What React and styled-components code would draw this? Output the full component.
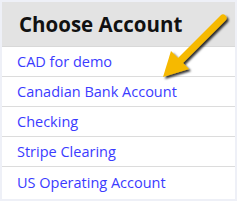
import styled, { createGlobalStyle } from 'styled-components'

const Global = createGlobalStyle`
  html, body {
    margin: 0;
    padding: 0;
    background: #eef0f7;
  }
  body {
    font-family: "Open Sans", "DejaVu Sans", sans-serif;
  }
`

const Page = styled.div`
  position: relative;
  width: 237px;
  height: 201px;
  padding: 2px;
  box-sizing: border-box;
`

const Panel = styled.div`
  background: #fff;
  width: 233px;
  height: 197px;
  display: flex;
  flex-flow: column;
`

const Header = styled.div`
  background: #e3e3e3;
  height: 45px;
  display: flex;
  align-items: center;
  padding-left: 17px;
  box-sizing: border-box;
  font-size: 20.5px;
  font-weight: bold;
  color: #111;
  border-bottom: 1px solid #d8d8d8;
`

const Row = styled.a`
  display: flex;
  align-items: center;
  height: 30px;
  box-sizing: border-box;
  padding-left: 15px;
  font-size: 14.5px;
  color: #3b3bff;
  text-decoration: none;
  border-bottom: ${props => props.last ? 'none' : '1px solid #dcdcdc'};
`

const Arrow = styled.svg`
  position: absolute;
  left: 154px;
  top: 10px;
  overflow: visible;
`

const accounts = [
  'CAD for demo',
  'Canadian Bank Account',
  'Checking',
  'Stripe Clearing',
  'US Operating Account',
]

export default function App() {
  return (
    <Page>
      <Global />
      <Panel>
        <Header>Choose Account</Header>
        {accounts.map((a, i) => (
          <Row key={a} href="#" last={i === accounts.length - 1}>{a}</Row>
        ))}
      </Panel>
      <Arrow width="80" height="75" viewBox="0 0 80 75">
        <defs>
          <filter id="sh" x="-20%" y="-20%" width="150%" height="150%">
            <feDropShadow dx="2" dy="2" stdDeviation="1.2" floodColor="#000" floodOpacity="0.8" />
          </filter>
        </defs>
        <g filter="url(#sh)">
          <line x1="69" y1="8" x2="25" y2="52" stroke="#f6b900" strokeWidth="7" strokeLinecap="round" />
          <polygon points="9,67 17,41 35,59" fill="#f6b900" />
        </g>
      </Arrow>
    </Page>
  )
}
